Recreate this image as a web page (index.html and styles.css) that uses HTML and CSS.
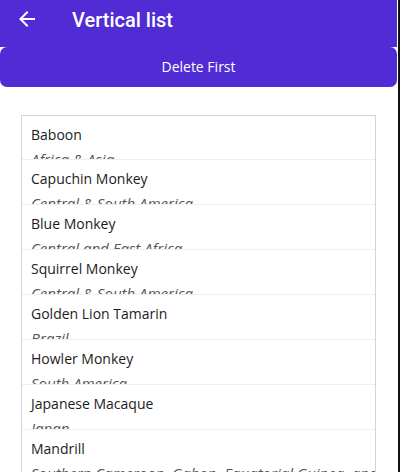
FILE: index.html
```html
<!DOCTYPE html>
<html lang="en">
<head>
<meta charset="utf-8">
<title>Vertical list</title>
<link rel="stylesheet" href="styles.css">
</head>
<body>
<div class="frame">
  <div class="app">
    <header class="appbar">
      <svg class="back" viewBox="0 0 24 24" width="24" height="24" aria-hidden="true">
        <path d="M20 11H7.83l5.59-5.59L12 4l-8 8 8 8 1.41-1.41L7.83 13H20v-2z" fill="#fff"/>
      </svg>
      <h1 class="title">Vertical list</h1>
    </header>
    <button class="delete-btn">Delete First</button>
    <ul class="monkey-list">
      <li class="item"><div class="name">Baboon</div><div class="loc">Africa &amp; Asia</div></li>
      <li class="item"><div class="name">Capuchin Monkey</div><div class="loc">Central &amp; South America</div></li>
      <li class="item"><div class="name">Blue Monkey</div><div class="loc">Central and East Africa</div></li>
      <li class="item"><div class="name">Squirrel Monkey</div><div class="loc">Central &amp; South America</div></li>
      <li class="item"><div class="name">Golden Lion Tamarin</div><div class="loc">Brazil</div></li>
      <li class="item"><div class="name">Howler Monkey</div><div class="loc">South America</div></li>
      <li class="item"><div class="name">Japanese Macaque</div><div class="loc">Japan</div></li>
      <li class="item"><div class="name">Mandrill</div><div class="loc">Southern Cameroon, Gabon, Equatorial Guinea, and Congo</div></li>
    </ul>
  </div>
  <div class="edge"></div>
</div>
</body>
</html>
```
FILE: styles.css
```css
html, body {
  margin: 0;
  padding: 0;
  background: #ffffff;
  height: 100%;
  overflow: hidden;
}

.frame {
  display: flex;
  height: 472px;
  width: 401px;
}

.app {
  flex: 0 0 397px;
  width: 397px;
  display: flex;
  flex-direction: column;
}

.edge {
  flex: 0 0 2px;
  margin-left: 1px;
  background: #111111;
}

.appbar {
  height: 47px;
  box-sizing: border-box;
  background: #512bd4;
  display: flex;
  align-items: flex-start;
  padding: 7px 0 0 15px;
}

.back {
  display: block;
  flex: 0 0 24px;
}

.title {
  margin: 1px 0 0 33px;
  font-family: Roboto, "Liberation Sans", sans-serif;
  font-weight: 500;
  font-size: 20px;
  line-height: 24px;
  color: #ffffff;
}

.delete-btn {
  display: block;
  width: 397px;
  height: 40px;
  margin: 0;
  padding: 0;
  border: none;
  border-radius: 7px;
  background: #512bd4;
  color: #ffffff;
  font-family: "Open Sans", "Noto Sans", sans-serif;
  font-size: 14px;
  line-height: 40px;
  text-align: center;
}

.monkey-list {
  list-style: none;
  margin: 28px 21px 0 21px;
  padding: 0;
  border: 1px solid #d4d4d4;
  border-bottom: none;
  flex: 1 1 auto;
  overflow: hidden;
}

.item {
  height: 44px;
  box-sizing: border-box;
  padding: 8px 0 0 9px;
  border-bottom: 1px solid #efefef;
  overflow: hidden;
  font-family: "Open Sans", "Noto Sans", sans-serif;
  font-size: 14px;
  white-space: nowrap;
}

.item:not(:first-child) {
  height: 45px;
}

.name {
  line-height: 21px;
  color: #1c1c1c;
}

.loc {
  margin-top: 4px;
  font-size: 15px;
  line-height: 21px;
  font-style: italic;
  color: #555555;
}
```
